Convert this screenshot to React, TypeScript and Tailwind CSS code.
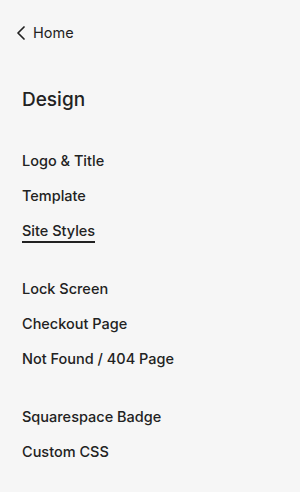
import React from 'react';

const groups: string[][] = [
  ['Logo & Title', 'Template', 'Site Styles'],
  ['Lock Screen', 'Checkout Page', 'Not Found / 404 Page'],
  ['Squarespace Badge', 'Custom CSS'],
];

export default function App() {
  return (
    <div
      className="min-h-[492px] w-[300px] bg-[#f6f6f6] text-[#222222]"
      style={{ fontFamily: 'Inter, "Noto Sans", sans-serif' }}
    >
      {/* Back link */}
      <div className="flex h-[66px] items-center pl-[16px]">
        <svg width="10" height="14" viewBox="0 0 10 14" className="mr-[7px]">
          <path d="M8 1 L2 7 L8 13" fill="none" stroke="#222" strokeWidth="1.7" strokeLinecap="round" strokeLinejoin="round" />
        </svg>
        <span className="text-[14.5px]">Home</span>
      </div>

      <div className="px-[22px]">
        <h1 className="mt-[20px] text-[19px] font-medium leading-[28px]">Design</h1>

        <div className="mt-[29px] flex flex-col gap-[23px]">
          {groups.map((g, gi) => (
            <ul key={gi} className="flex flex-col">
              {g.map((item) => (
                <li key={item} className="flex h-[35px] items-center">
                  <span
                    className={
                      item === 'Site Styles'
                        ? 'text-[14.5px] font-medium leading-[20px] border-b-2 border-[#222] mt-[2px]'
                        : 'text-[14.5px] font-medium leading-[20px]'
                    }
                  >
                    {item}
                  </span>
                </li>
              ))}
            </ul>
          ))}
        </div>
      </div>
    </div>
  );
}
